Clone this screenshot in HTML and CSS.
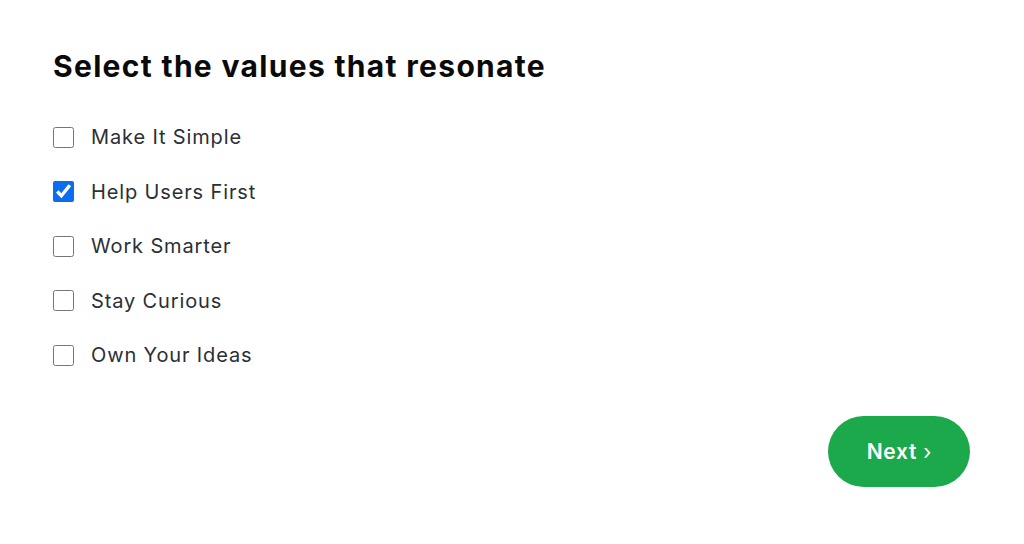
FILE: index.html
```html
<!DOCTYPE html>
<html lang="en">
<head>
<meta charset="utf-8">
<link rel="stylesheet" href="styles.css">
</head>
<body>
<main class="page">
  <h1 class="title">Select the values that resonate</h1>
  <div class="options">
    <label class="option"><input type="checkbox" class="box"><span>Make It Simple</span></label>
    <label class="option"><input type="checkbox" class="box" checked><span>Help Users First</span></label>
    <label class="option"><input type="checkbox" class="box"><span>Work Smarter</span></label>
    <label class="option"><input type="checkbox" class="box"><span>Stay Curious</span></label>
    <label class="option"><input type="checkbox" class="box"><span>Own Your Ideas</span></label>
  </div>
  <div class="actions">
    <button class="next">Next <span class="chev">›</span></button>
  </div>
</main>
</body>
</html>
```
FILE: styles.css
```css
html, body {
  margin: 0;
  padding: 0;
  background: #ffffff;
}
body {
  font-family: Inter, "Noto Sans", sans-serif;
  color: #111;
}
.page {
  padding: 46px 54px 0 53px;
}
.title {
  margin: 0;
  font-size: 30px;
  font-weight: 700;
  line-height: 40px;
  color: #0a0a0a;
  letter-spacing: 0.044em;
}
.options {
  margin-top: 41px;
  display: flex;
  flex-direction: column;
  gap: 34.5px;
}
.option {
  display: flex;
  align-items: center;
  height: 20px;
  font-size: 20px;
  letter-spacing: 0.043em;
  color: #2b2f36;
  cursor: pointer;
}
.box {
  width: 21px;
  height: 21px;
  margin: 0 17px 0 0;
  accent-color: #0b6cf0;
}
.actions {
  display: flex;
  justify-content: flex-end;
  margin-top: 51px;
}
.next {
  width: 142px;
  height: 71px;
  border: none;
  border-radius: 36px;
  background: #1ba94c;
  color: #fff;
  font-family: Inter, "Noto Sans", sans-serif;
  font-size: 21px;
  font-weight: 600;
  letter-spacing: 0.035em;
  cursor: pointer;
}
.chev {
  font-weight: 400;
  letter-spacing: 0;
}
```
